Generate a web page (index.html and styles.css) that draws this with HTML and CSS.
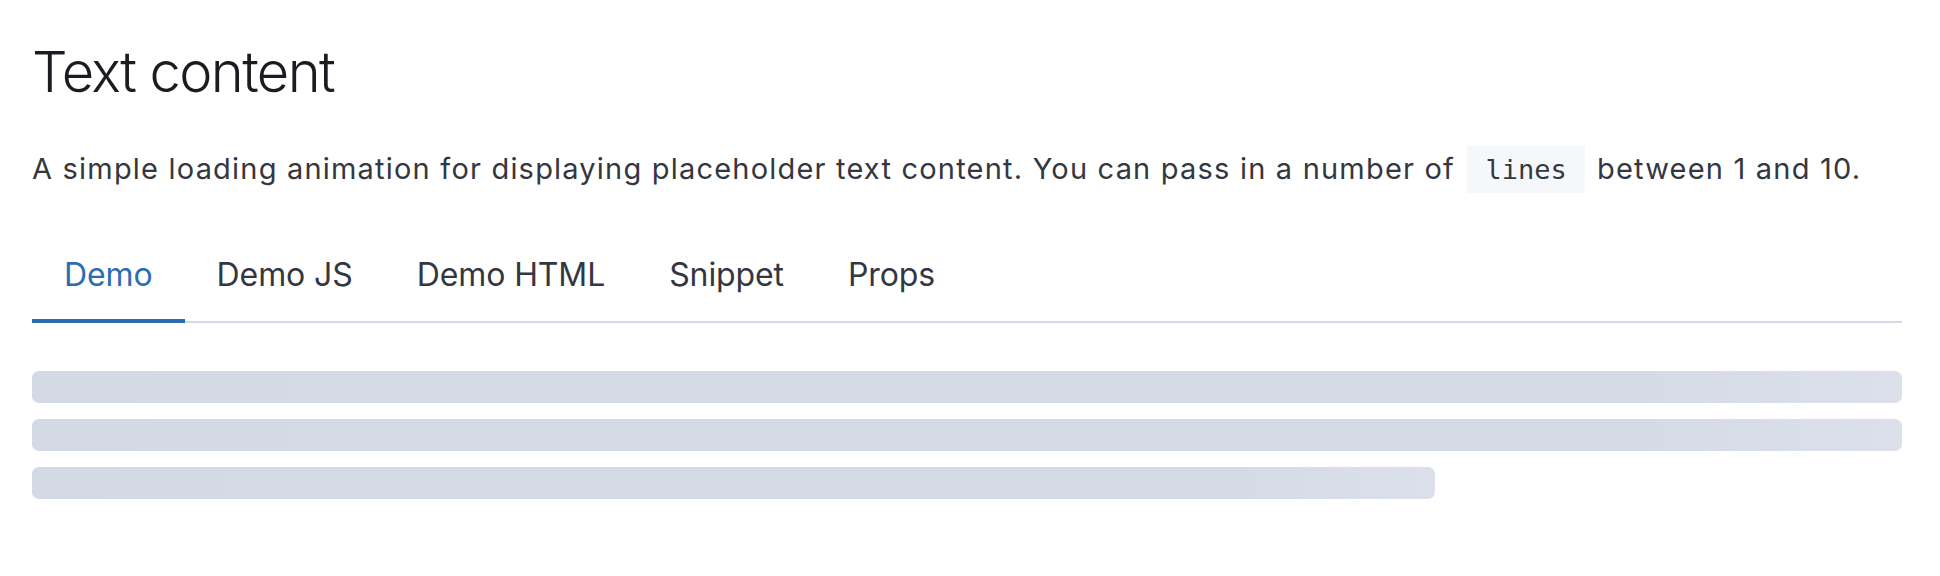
FILE: index.html
```html
<!DOCTYPE html>
<html lang="en">
<head>
<meta charset="utf-8">
<title>Text content</title>
<link rel="stylesheet" href="styles.css">
</head>
<body>
<main class="page">
  <h1 class="title">Text content</h1>
  <p class="intro">A simple loading animation for displaying placeholder text content. You can pass in a number of <code class="code">lines</code> between 1 and 10.</p>
  <nav class="tabs">
    <span class="tab tab-selected">Demo</span>
    <span class="tab">Demo JS</span>
    <span class="tab">Demo HTML</span>
    <span class="tab">Snippet</span>
    <span class="tab">Props</span>
  </nav>
  <div class="skeleton">
    <div class="line"></div>
    <div class="line"></div>
    <div class="line line-short"></div>
  </div>
</main>
</body>
</html>
```

FILE: styles.css
```css
html, body {
  margin: 0;
  padding: 0;
  background: #ffffff;
}

.page {
  padding: 32px 38px 0 32px;
  font-family: Inter, "Noto Sans", sans-serif;
  color: #343741;
}

.title {
  margin: 0;
  font-size: 56px;
  line-height: 80px;
  font-weight: 300;
  letter-spacing: -1.6px;
  color: #1a1c21;
}

.intro {
  margin: 36px 0 0;
  font-size: 29px;
  line-height: 42px;
  letter-spacing: 1.2px;
  color: #343741;
}

.code {
  font-family: "DejaVu Sans Mono", "Liberation Mono", monospace;
  font-size: 27px;
  letter-spacing: 0;
  padding: 8px 18px;
  margin: 0 3px;
  background: #f5f7fa;
  color: #343741;
}

.tabs {
  margin-top: 36px;
  display: flex;
  height: 96px;
  box-shadow: inset 0 -2px 0 #d3dae6;
}

.tab {
  padding: 0 32px;
  font-size: 32px;
  line-height: 96px;
  letter-spacing: -0.1px;
  color: #343741;
}

.tab-selected {
  color: #2b6db3;
  box-shadow: inset 0 -4px 0 #2b6db3;
}

.skeleton {
  margin-top: 48px;
  display: flex;
  flex-direction: column;
  gap: 16px;
}

.line {
  height: 32px;
  border-radius: 7px;
  background: linear-gradient(90deg, #d3dae6 0%, #d5dbe5 85%, #dbe0ea 100%);
}

.line-short {
  width: 75%;
}
```
